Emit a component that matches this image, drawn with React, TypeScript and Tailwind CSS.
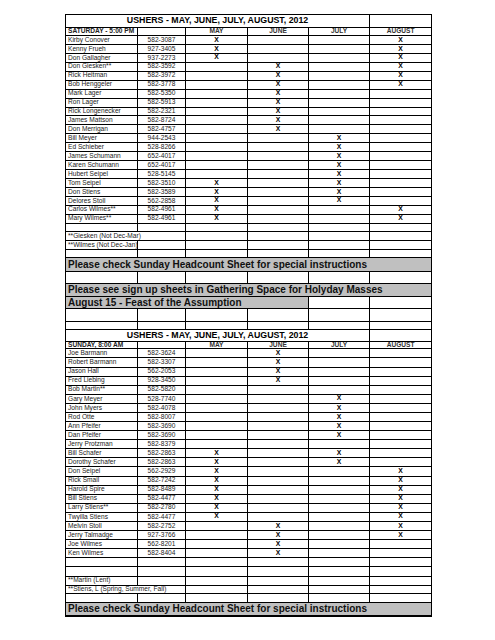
import React from 'react';

// one person per row: marks = May, June, July, August ('x' = serving)
type Person = { name: string; phone: string; marks: string };

const saturday: Person[] = [
  { name: 'Kirby Conover', phone: '582-3087', marks: 'x..x' },
  { name: 'Kenny Frueh', phone: '927-3405', marks: 'x..x' },
  { name: 'Don Gallagher', phone: '937-2273', marks: 'x..x' },
  { name: 'Don Giesken**', phone: '582-3592', marks: '.x.x' },
  { name: 'Rick Heitman', phone: '582-3972', marks: '.x.x' },
  { name: 'Bob Henggeler', phone: '582-3778', marks: '.x.x' },
  { name: 'Mark Lager', phone: '582-5350', marks: '.x..' },
  { name: 'Ron Lager', phone: '582-5913', marks: '.x..' },
  { name: 'Rick Longenecker', phone: '582-2321', marks: '.x..' },
  { name: 'James Mattson', phone: '582-8724', marks: '.x..' },
  { name: 'Don Merrigan', phone: '582-4757', marks: '.x..' },
  { name: 'Bill Meyer', phone: '944-2543', marks: '..x.' },
  { name: 'Ed Schieber', phone: '528-8266', marks: '..x.' },
  { name: 'James Schumann', phone: '652-4017', marks: '..x.' },
  { name: 'Karen Schumann', phone: '652-4017', marks: '..x.' },
  { name: 'Hubert Seipel', phone: '528-5145', marks: '..x.' },
  { name: 'Tom Seipel', phone: '582-3510', marks: 'x.x.' },
  { name: 'Don Stiens', phone: '582-3589', marks: 'x.x.' },
  { name: 'Delores Stoll', phone: '562-2858', marks: 'x.x.' },
  { name: 'Carlos Wilmes**', phone: '582-4961', marks: 'x..x' },
  { name: 'Mary Wilmes**', phone: '582-4961', marks: 'x..x' },
];

const sunday: Person[] = [
  { name: 'Joe Barmann', phone: '582-3624', marks: '.x..' },
  { name: 'Robert Barmann', phone: '582-3307', marks: '.x..' },
  { name: 'Jason Hall', phone: '562-2053', marks: '.x..' },
  { name: 'Fred Liebing', phone: '928-3450', marks: '.x..' },
  { name: 'Bob Martin**', phone: '582-5820', marks: '....' },
  { name: 'Gary Meyer', phone: '528-7740', marks: '..x.' },
  { name: 'John Myers', phone: '582-4078', marks: '..x.' },
  { name: 'Rod Otte', phone: '582-8007', marks: '..x.' },
  { name: 'Ann Pfeifer', phone: '582-3690', marks: '..x.' },
  { name: 'Dan Pfeifer', phone: '582-3690', marks: '..x.' },
  { name: 'Jerry Protzman', phone: '582-8379', marks: '....' },
  { name: 'Bill Schafer', phone: '582-2863', marks: 'x.x.' },
  { name: 'Dorothy Schafer', phone: '582-2863', marks: 'x.x.' },
  { name: 'Don Seipel', phone: '562-2929', marks: 'x..x' },
  { name: 'Rick Smail', phone: '582-7242', marks: 'x..x' },
  { name: 'Harold Spire', phone: '582-8489', marks: 'x..x' },
  { name: 'Bill Stiens', phone: '582-4477', marks: 'x..x' },
  { name: 'Larry Stiens**', phone: '582-2780', marks: 'x..x' },
  { name: 'Twyilla Stiens', phone: '582-4477', marks: 'x..x' },
  { name: 'Melvin Stoll', phone: '582-2752', marks: '.x.x' },
  { name: 'Jerry Talmadge', phone: '927-3766', marks: '.x.x' },
  { name: 'Joe Wilmes', phone: '562-8201', marks: '.x..' },
  { name: 'Ken Wilmes', phone: '582-8404', marks: '.x..' },
];

const cell = 'border border-black p-0 px-[2px] leading-none whitespace-nowrap align-middle';
const months = ['MAY', 'JUNE', 'JULY', 'AUGUST'];

const Blank = ({ h }: { h: string }) => (
  <tr className={h}>
    {[0, 1, 2, 3, 4, 5].map((i) => <td key={i} className={cell} />)}
  </tr>
);

const Title = ({ h }: { h: string }) => (
  <tr className={h}>
    <td colSpan={5} className={`${cell} text-center font-bold text-[8.8px] align-bottom pb-[1px]`}>
      USHERS - MAY, JUNE, JULY, AUGUST, 2012
    </td>
    <td className={cell} />
  </tr>
);

const Header = ({ label, h }: { label: string; h: string }) => (
  <tr className={h}>
    <td className={`${cell} font-bold text-[6.6px] text-[#222]`}>{label}</td>
    <td className={cell} />
    {months.map((m) => (
      <td key={m} className={`${cell} text-center font-bold text-[6.6px] text-[#333]`}>{m}</td>
    ))}
  </tr>
);

const PersonRow = ({ p, h }: { p: Person; h: string }) => (
  <tr className={h}>
    <td className={`${cell} text-[6.6px] text-[#222]`}>{p.name}</td>
    <td className={`${cell} text-center text-[6.6px] text-[#222]`}>{p.phone}</td>
    {p.marks.split('').map((m, i) => (
      <td key={i} className={`${cell} text-center font-bold text-[6.8px]`}>{m === 'x' ? 'X' : ''}</td>
    ))}
  </tr>
);

const Note = ({ text, span, h }: { text: string; span: number; h: string }) => (
  <tr className={h}>
    <td colSpan={span} className={`${cell} text-[6.6px] text-[#222]`}>{text}</td>
    {Array.from({ length: 6 - span }).map((_, i) => <td key={i} className={cell} />)}
  </tr>
);

const Band = ({ text, span, h, last }: { text: string; span: number; h: string; last?: boolean }) => (
  <tr className={h}>
    <td
      colSpan={span}
      className={`${cell} bg-[#c0c0c0] font-bold text-[10px] text-[#111] ${last ? 'border-b-2' : ''}`}
    >
      {text}
    </td>
    {Array.from({ length: 6 - span }).map((_, i) => <td key={i} className={cell} />)}
  </tr>
);

export default function App() {
  return (
    <div className="w-[495px] h-[640px] bg-white pt-[14px] pl-[65px] font-['Liberation_Sans',Arial,sans-serif] text-black">
      <table className="border-collapse table-fixed w-[366px]">
        <colgroup>
          <col className="w-[72px]" />
          <col className="w-[48px]" />
          <col className="w-[62px]" />
          <col className="w-[61px]" />
          <col className="w-[61px]" />
          <col className="w-[62px]" />
        </colgroup>
        <tbody>
          <Title h="h-[13px]" />
          <Header label="SATURDAY - 5:00 PM" h="h-[8px]" />
          {saturday.map((p) => <PersonRow key={p.name} p={p} h="h-[8.95px]" />)}
          <Blank h="h-[8.8px]" />
          <Note text="**Giesken (Not Dec-Mar)" span={2} h="h-[8.6px]" />
          <Note text="**Wilmes (Not Dec-Jan)" span={1} h="h-[8.8px]" />
          <Blank h="h-[8.6px]" />
          <Band text="Please check Sunday Headcount Sheet for special instructions" span={6} h="h-[13.4px]" />
          <Blank h="h-[12.6px]" />
          <Band text="Please see sign up sheets in Gathering Space for Holyday Masses" span={6} h="h-[12.4px]" />
          <Band text="August 15 - Feast of the Assumption" span={4} h="h-[12.6px]" />
          <Blank h="h-[12.4px]" />
          <Blank h="h-[8.6px]" />
          <Title h="h-[11.4px]" />
          <Header label="SUNDAY, 8:00 AM" h="h-[7.3px]" />
          {sunday.map((p) => <PersonRow key={p.name} p={p} h="h-[9.08px]" />)}
          <Blank h="h-[9px]" />
          <Blank h="h-[9.3px]" />
          <Note text="**Martin (Lent)" span={1} h="h-[9px]" />
          <Note text="**Stiens, L (Spring, Summer, Fall)" span={2} h="h-[8.6px]" />
          <Blank h="h-[9px]" />
          <Band text="Please check Sunday Headcount Sheet for special instructions" span={6} h="h-[13.4px]" last />
        </tbody>
      </table>
    </div>
  );
}
